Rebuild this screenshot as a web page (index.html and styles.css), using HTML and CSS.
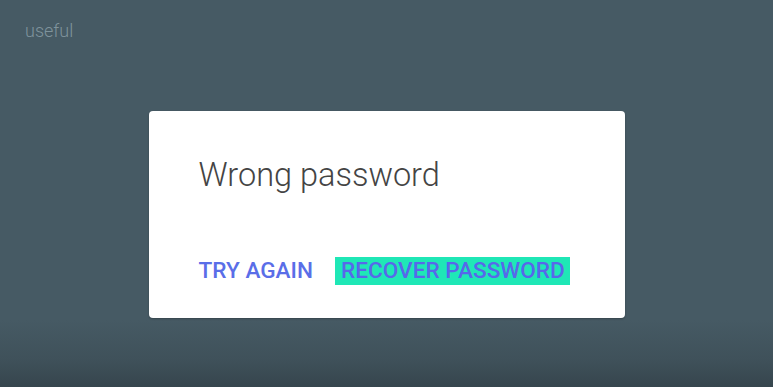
FILE: index.html
```html
<!DOCTYPE html>
<html>
<head>
<meta charset="utf-8">
<link rel="stylesheet" href="styles.css">
</head>
<body>
<div class="page">
  <div class="brand">useful</div>
  <div class="stage">
    <div class="dialog">
      <div class="title">Wrong password</div>
      <div class="actions">
        <span class="btn">TRY AGAIN</span>
        <span class="btn btn-focus">RECOVER PASSWORD</span>
      </div>
    </div>
  </div>
</div>
</body>
</html>
```
FILE: styles.css
```css
html, body {
  margin: 0;
  padding: 0;
}
body {
  width: 773px;
  height: 387px;
  overflow: hidden;
  font-family: Roboto, "Liberation Sans", sans-serif;
  background: linear-gradient(to bottom, #465a64 0px, #465a64 320px, #3f515a 360px, #36454d 387px);
}
.page {
  height: 387px;
  display: flex;
  flex-direction: column;
}
.brand {
  padding: 20px 0 0 25px;
  font-size: 18px;
  line-height: 22px;
  color: #7f939c;
  font-weight: 300;
  height: 22px;
}
.stage {
  display: flex;
  justify-content: center;
  padding-top: 69px;
}
.dialog {
  width: 376px;
  height: 130px;
  background: #ffffff;
  border-radius: 4px;
  padding: 44px 50px 33px 50px;
  box-shadow: 0 1px 2px rgba(0,0,0,0.25);
}
.title {
  font-size: 32.5px;
  line-height: 40px;
  font-weight: 300;
  color: #444444;
  white-space: nowrap;
}
.actions {
  margin-top: 62px;
  margin-left: -6px;
  display: flex;
  gap: 17px;
  white-space: nowrap;
}
.btn {
  flex-shrink: 0;
  font-size: 22.6px;
  line-height: 28px;
  font-weight: 500;
  color: #5a6ee8;
  padding: 0 5px 0 6px;
}
.btn-focus {
  background: #1fe7b6;
  color: #5768ea;
}
```
